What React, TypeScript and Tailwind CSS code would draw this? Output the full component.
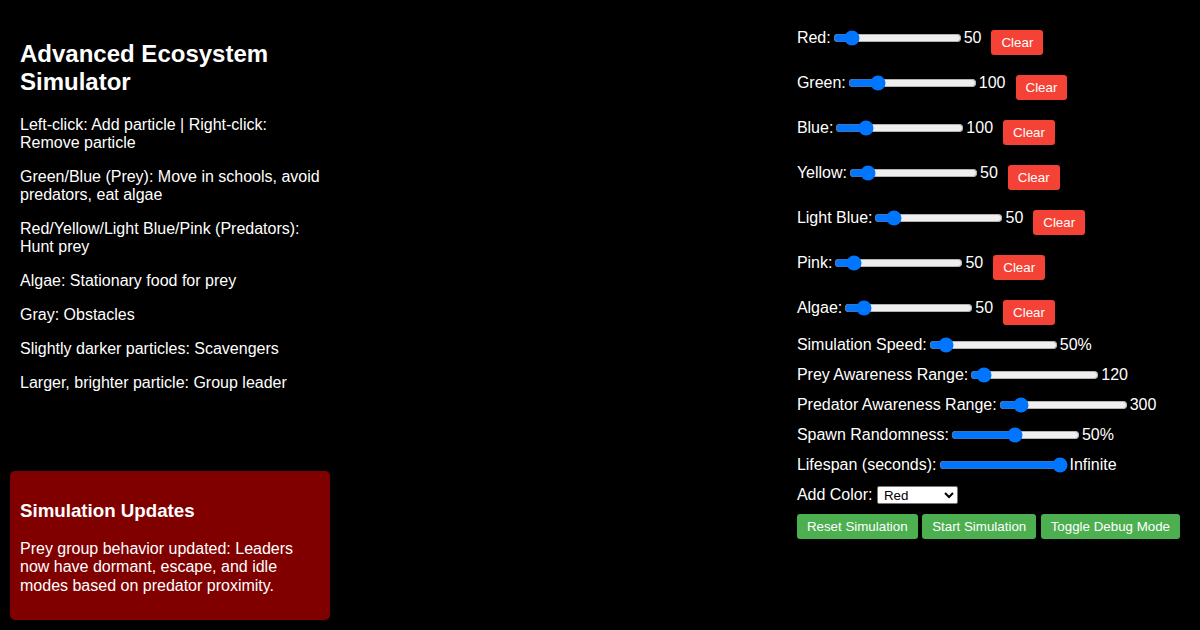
import React from "react";

const colorRows = [
  { label: "Red:", value: 50 },
  { label: "Green:", value: 100 },
  { label: "Blue:", value: 100 },
  { label: "Yellow:", value: 50 },
  { label: "Light Blue:", value: 50 },
  { label: "Pink:", value: 50 },
  { label: "Algae:", value: 50 },
];

const sliderRows = [
  { label: "Simulation Speed:", min: 0.1, max: 5, step: 0.1, value: 0.5, text: "50%" },
  { label: "Prey Awareness Range:", min: 100, max: 500, step: 1, value: 120, text: "120" },
  { label: "Predator Awareness Range:", min: 200, max: 1000, step: 1, value: 300, text: "300" },
  { label: "Spawn Randomness:", min: 0, max: 100, step: 1, value: 50, text: "50%" },
  { label: "Lifespan (seconds):", min: 0, max: 100, step: 1, value: 100, text: "Infinite" },
];

function Range({ min, max, step, value }: { min: number; max: number; step: number; value: number }) {
  return (
    <input
      type="range"
      min={min}
      max={max}
      step={step}
      defaultValue={value}
      className="mx-[2px] w-[129px] h-[16px]"
    />
  );
}

export default function App() {
  return (
    <div
      className="w-[1200px] h-[630px] bg-black text-white flex justify-between overflow-hidden"
      style={{ fontFamily: '"Liberation Sans", Arial, sans-serif' }}
    >
      <div className="w-[320px] ml-[10px] py-[10px] flex flex-col justify-between">
        <div className="p-[10px] w-[320px]">
          <h2 className="text-[24px] font-bold leading-[1.15] mt-[20px] mb-[21px]">Advanced Ecosystem Simulator</h2>
          <div className="flex flex-col gap-[16px] text-[16px] leading-[18px]">
            <p>Left-click: Add particle | Right-click: Remove particle</p>
            <p>Green/Blue (Prey): Move in schools, avoid predators, eat algae</p>
            <p>Red/Yellow/Light Blue/Pink (Predators): Hunt prey</p>
            <p>Algae: Stationary food for prey</p>
            <p>Gray: Obstacles</p>
            <p>Slightly darker particles: Scavengers</p>
            <p>Larger, brighter particle: Group leader</p>
          </div>
        </div>
        <div className="bg-[#800000] rounded-[5px] px-[10px] pt-[10px] pb-[25px] w-[320px]">
          <h3 className="text-[18.72px] font-bold leading-[1.15] mt-[18.72px] mb-[18.72px]">Simulation Updates</h3>
          <p className="text-[16px] leading-[1.15]">
            Prey group behavior updated: Leaders now have dormant, escape, and idle modes based on predator proximity.
          </p>
        </div>
      </div>

      <div className="pr-[20px] pt-[28.5px] text-[16px] leading-[18px]">
        <div className="flex flex-col gap-[10px]">
          {colorRows.map((r) => (
            <div key={r.label} className="flex items-start h-[35px]">
              <div className="flex items-center h-[18px]">
                <span>{r.label}</span>
                <Range min={0} max={500} step={1} value={r.value} />
                <span>{r.value}</span>
              </div>
              <button className="ml-[10px] mt-[1.5px] h-[25px] px-[10px] bg-[#f44336] text-white text-[13.33px] leading-[15px] rounded-[3px]">
                Clear
              </button>
            </div>
          ))}
        </div>
        <div className="mt-[2px] flex flex-col">
          {sliderRows.map((r) => (
            <div key={r.label} className="h-[30px]">
              <div className="flex items-center h-[18px]">
                <span>{r.label}</span>
                <Range min={r.min} max={r.max} step={r.step} value={r.value} />
                <span>{r.text}</span>
              </div>
            </div>
          ))}
          <div className="h-[28.5px]">
            <div className="flex items-center h-[18px]">
              <span>Add Color:</span>
              <select
                defaultValue="Red"
                className="ml-[4.5px] w-[81px] h-[18px] bg-white text-black text-[13.33px] border border-[#767676] rounded-[2px] pl-[2px]"
              >
                <option>Red</option>
                <option>Green</option>
                <option>Blue</option>
                <option>Yellow</option>
                <option>Light Blue</option>
                <option>Pink</option>
                <option>Algae</option>
              </select>
            </div>
          </div>
          <div className="flex gap-[4.5px]">
            {["Reset Simulation", "Start Simulation", "Toggle Debug Mode"].map((t) => (
              <button
                key={t}
                className="h-[25px] px-[10px] bg-[#4caf50] text-white text-[13.33px] leading-[15px] rounded-[3px]"
              >
                {t}
              </button>
            ))}
          </div>
        </div>
      </div>
    </div>
  );
}
